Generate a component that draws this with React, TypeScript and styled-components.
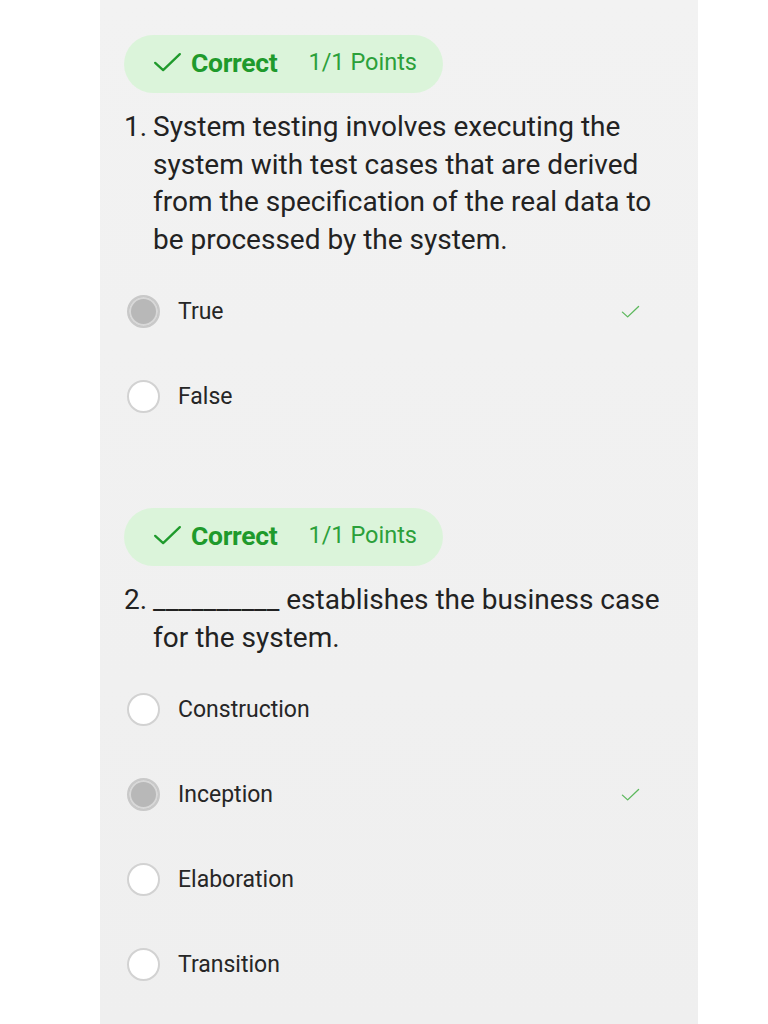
import React from "react";
import styled, { createGlobalStyle } from "styled-components";

const Global = createGlobalStyle`
  html, body { margin: 0; padding: 0; background: #ffffff; }
  body { font-family: Roboto, "Noto Sans", "Liberation Sans", sans-serif; }
`;

const Page = styled.div`
  display: flex;
  width: 768px;
  min-height: 1024px;
  background: #ffffff;
`;

const Panel = styled.main`
  margin-left: 100px;
  width: 598px;
  min-height: 1024px;
  box-sizing: border-box;
  padding: 35px 0 0 24px;
  background: linear-gradient(180deg, #f2f2f2 0%, #efefef 100%);
  display: flex;
  flex-direction: column;
`;

const Section = styled.section<{ $gap?: number }>`
  display: flex;
  flex-direction: column;
  margin-top: ${(p) => p.$gap ?? 0}px;
`;

const Badge = styled.div`
  align-self: flex-start;
  display: inline-flex;
  align-items: center;
  height: 58px;
  padding: 0 26px 4px 29px;
  border-radius: 29px;
  background: #dbf4da;
  box-sizing: border-box;
`;

const BadgeTitle = styled.span`
  margin-left: 9px;
  font-size: 26.5px;
  font-weight: 700;
  color: #1f9a2c;
  letter-spacing: -0.3px;
`;

const BadgePoints = styled.span`
  margin-left: 31px;
  font-size: 23.5px;
  font-weight: 400;
  color: #2ca03a;
`;

const Question = styled.div`
  display: flex;
  margin-top: 15px;
  font-size: 28px;
  line-height: 37.5px;
  color: #222222;
`;

const Num = styled.span`
  flex: 0 0 29px;
`;

const QText = styled.span`
  flex: 1;
  padding-right: 30px;
`;

const Options = styled.div`
  display: flex;
  flex-direction: column;
  margin-top: 11px;
`;

const Option = styled.div`
  display: flex;
  align-items: center;
  height: 85px;
  padding-right: 58px;
`;

const Radio = styled.span<{ $checked?: boolean }>`
  flex: 0 0 auto;
  width: 33px;
  height: 33px;
  margin-left: 3px;
  border-radius: 50%;
  box-sizing: border-box;
  border: 2px solid ${(p) => (p.$checked ? "#c9c9c9" : "#d2d2d2")};
  background: ${(p) => (p.$checked ? "#b8b8b8" : "#ffffff")};
  box-shadow: ${(p) => (p.$checked ? "inset 0 0 0 2px #d8d8d8" : "none")};
`;

const Label = styled.span`
  flex: 1;
  margin-left: 18px;
  font-size: 23px;
  color: #262626;
`;

const Tick = ({ size = 20, color = "#4caf50", width = 1.6 }: { size?: number; color?: string; width?: number }) => (
  <svg width={size} height={size * 0.7} viewBox="0 0 20 14" fill="none">
    <path d="M1.5 7.5 L7 12.5 L18.5 1.5" stroke={color} strokeWidth={width} strokeLinecap="round" strokeLinejoin="round" />
  </svg>
);

type Opt = { label: string; checked?: boolean; correct?: boolean };

const QuestionBlock = ({
  num,
  text,
  options,
  gap,
}: {
  num: string;
  text: string;
  options: Opt[];
  gap?: number;
}) => (
  <Section $gap={gap}>
    <Badge>
      <Tick size={29} color="#1f9a2c" width={1.6} />
      <BadgeTitle>Correct</BadgeTitle>
      <BadgePoints>1/1 Points</BadgePoints>
    </Badge>
    <Question>
      <Num>{num}</Num>
      <QText>{text}</QText>
    </Question>
    <Options>
      {options.map((o) => (
        <Option key={o.label}>
          <Radio $checked={o.checked} />
          <Label>{o.label}</Label>
          {o.correct && <Tick size={19} color="#5cb85c" width={1.4} />}
        </Option>
      ))}
    </Options>
  </Section>
);

export default function App() {
  return (
    <Page>
      <Global />
      <Panel>
        <QuestionBlock
          num="1."
          text="System testing involves executing the system with test cases that are derived from the specification of the real data to be processed by the system."
          options={[
            { label: "True", checked: true, correct: true },
            { label: "False" },
          ]}
        />
        <QuestionBlock
          gap={69}
          num="2."
          text="__________ establishes the business case for the system."
          options={[
            { label: "Construction" },
            { label: "Inception", checked: true, correct: true },
            { label: "Elaboration" },
            { label: "Transition" },
          ]}
        />
      </Panel>
    </Page>
  );
}
